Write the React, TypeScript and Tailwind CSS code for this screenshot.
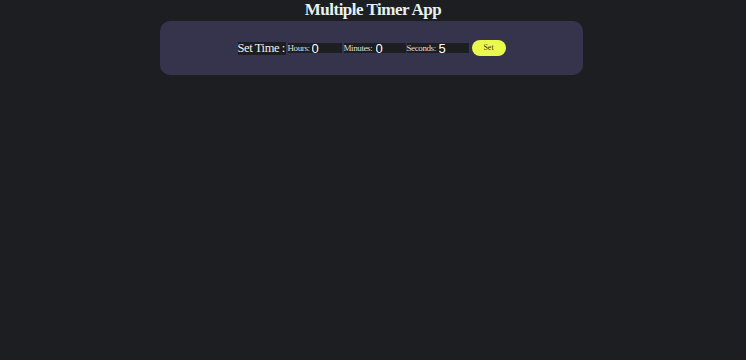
import { useState } from 'react';

const fields = [
  { label: 'Hours:', key: 'hours', labelWidth: 'w-[22px]', gap: 'ml-[2px]' },
  { label: 'Minutes:', key: 'minutes', labelWidth: 'w-[30px]', gap: 'ml-[2px]' },
  { label: 'Seconds:', key: 'seconds', labelWidth: 'w-[30px]', gap: 'ml-[1px]' },
] as const;

export default function App() {
  const [time, setTime] = useState({ hours: '0', minutes: '0', seconds: '5' });

  return (
    <div className="min-h-screen bg-[#1d1e22] text-[#e4e4e4] font-['Liberation_Serif',serif]">
      <h1 className="h-[21px] text-center text-[17px] leading-[19px] font-bold tracking-[-0.5px] text-[#e6f2f0]">
        Multiple Timer App
      </h1>

      <div className="ml-[160px] flex h-[54px] w-[423px] items-center justify-center rounded-[10px] bg-[#36334d]">
        <div className="flex items-center">
          <span className="flex h-[13px] w-[48px] items-center bg-[#1d1e22] text-[12.5px] leading-none tracking-[-0.4px] text-[#f0f0f0]">
            Set Time :
          </span>
          {fields.map((f) => (
            <div key={f.key} className={`flex items-center ${f.gap}`}>
              <label
                htmlFor={f.key}
                className={`flex h-[10px] ${f.labelWidth} items-center bg-[#1d1e22] text-[9px] leading-none tracking-[-0.4px] text-[#dcdcdc]`}
              >
                {f.label}
              </label>
              <input
                id={f.key}
                type="text"
                value={time[f.key]}
                onChange={(e) => setTime({ ...time, [f.key]: e.target.value })}
                className="h-[10px] w-[32px] bg-[#1d1e22] pl-[2px] font-['Liberation_Sans',sans-serif] text-[13px] leading-[10px] text-white outline-none"
              />
            </div>
          ))}
          <button className="ml-[3px] h-[16px] w-[34px] rounded-full bg-[#e9fa4b] text-[8px] text-[#333] font-['Liberation_Serif',serif]">
            Set
          </button>
        </div>
      </div>
    </div>
  );
}
